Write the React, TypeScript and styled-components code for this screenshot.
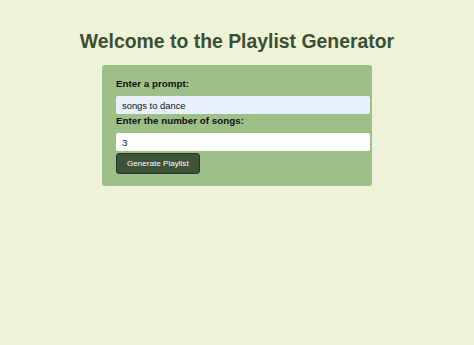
import React, { useState } from "react";
import styled, { createGlobalStyle } from "styled-components";

const GlobalStyle = createGlobalStyle`
  html, body {
    margin: 0;
    padding: 0;
    background: #eef2d6;
    font-family: "Liberation Sans", Arial, sans-serif;
  }
`;

const Page = styled.div`
  padding-top: 30px;
  display: flex;
  flex-direction: column;
  align-items: center;
`;

const Title = styled.h1`
  margin: 0 0 13px 0;
  font-size: 19.4px;
  line-height: 22px;
  font-weight: bold;
  color: #3b4f33;
`;

const Card = styled.form`
  width: 242px;
  padding: 13px 14px 12px;
  background: #9dbf88;
  border-radius: 3px;
  display: flex;
  flex-direction: column;
  align-items: flex-start;
`;

const Label = styled.label`
  display: block;
  font-size: 9.8px;
  line-height: 12px;
  font-weight: bold;
  color: #111;
  margin-bottom: 6px;
`;

const Input = styled.input<{ $filled?: boolean }>`
  width: 100%;
  height: 18px;
  padding: 0 6px;
  margin: 0 0 1px 0;
  border: none;
  border-radius: 2px;
  outline: none;
  font-family: "Liberation Sans", Arial, sans-serif;
  font-size: 9.4px;
  color: #111;
  background: ${({ $filled }) => ($filled ? "#e8f0fe" : "#ffffff")};
`;

const Button = styled.button`
  margin-top: 1px;
  height: 21px;
  padding: 0 10px;
  border: 1px solid #2a3826;
  border-radius: 3px;
  background: #3e5237;
  color: #ffffff;
  font-family: "Liberation Sans", Arial, sans-serif;
  font-size: 8.1px;
  cursor: pointer;
`;

export default function App() {
  const [prompt, setPrompt] = useState("songs to dance");
  const [count, setCount] = useState("3");

  return (
    <>
      <GlobalStyle />
      <Page>
        <Title>Welcome to the Playlist Generator</Title>
        <Card onSubmit={(e) => e.preventDefault()}>
          <Label htmlFor="prompt">Enter a prompt:</Label>
          <Input
            id="prompt"
            $filled
            value={prompt}
            onChange={(e) => setPrompt(e.target.value)}
          />
          <Label htmlFor="count">Enter the number of songs:</Label>
          <Input
            id="count"
            type="number"
            value={count}
            onChange={(e) => setCount(e.target.value)}
          />
          <Button type="submit">Generate Playlist</Button>
        </Card>
      </Page>
    </>
  );
}
